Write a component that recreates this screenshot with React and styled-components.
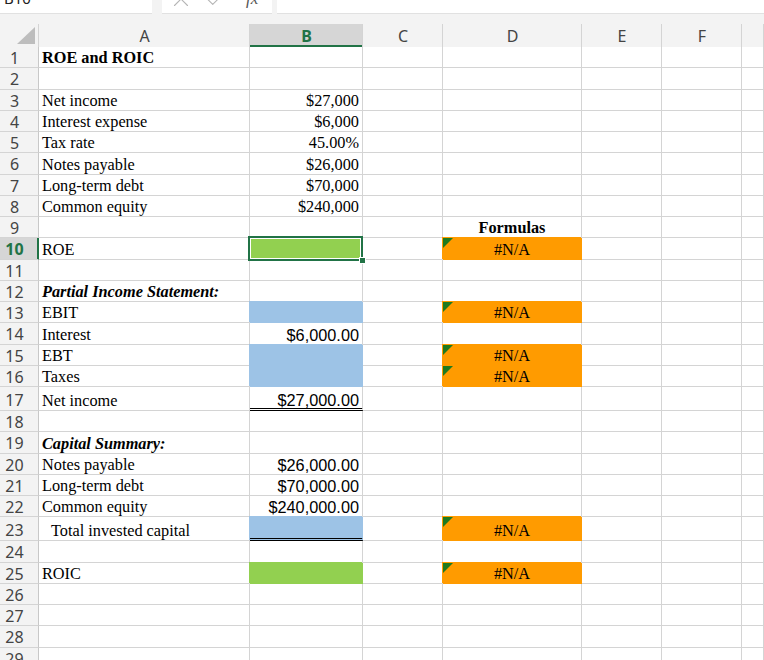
import React from "react";
import styled, { createGlobalStyle } from "styled-components";
import { X, Check, ChevronDown } from "lucide-react";

const GlobalStyle = createGlobalStyle`
  html, body {
    margin: 0;
    padding: 0;
    background: #fff;
    overflow: hidden;
  }
`;

const COLS = "39px 211px 113px 80px 139px 80px 80px 1fr";
const GRID = "#d4d4d4";
const XL_GREEN = "#217346";
const SERIF = `"Liberation Serif", "Times New Roman", serif`;
const SANS = `"Liberation Sans", Arial, sans-serif`;
const UI = `"Noto Sans", "Open Sans", sans-serif`;

const Page = styled.div`
  width: 764px;
  height: 660px;
  overflow: hidden;
  background: #fff;
`;

const FormulaBar = styled.div`
  display: flex;
  height: 32px;
  margin-top: -18px;
  background: #f3f3f3;
`;

const NameBox = styled.div`
  width: 152px;
  box-sizing: border-box;
  display: flex;
  align-items: center;
  justify-content: space-between;
  padding: 0 4px 0 4px;
  background: #fff;
  border-bottom: 1px solid #e1e1e1;
  font-family: ${UI};
  font-size: 15px;
  color: #222;
`;

const FxBox = styled.div`
  width: 110px;
  margin-left: 10px;
  display: flex;
  align-items: center;
  gap: 9px;
  padding: 3px 0 0 6px;
  box-sizing: border-box;
  background: #fff;
  border-bottom: 1px solid #e1e1e1;
  color: #b5b5b5;
`;

const Fx = styled.span`
  font-family: ${SERIF};
  font-style: italic;
  font-size: 17px;
  color: #555;
  margin-left: 8px;
`;

const FormulaInput = styled.div`
  flex: 1;
  margin-left: 5px;
  background: #fff;
  border-bottom: 1px solid #e1e1e1;
`;

const Spacer = styled.div`
  height: 10px;
  background: #f3f3f3;
`;

const Row = styled.div`
  display: grid;
  grid-template-columns: ${COLS};
  height: ${(p) => p.$h}px;
`;

const HeadCell = styled.div`
  display: flex;
  align-items: center;
  justify-content: center;
  padding-top: 1px;
  background: ${(p) => (p.$active ? "#d6d6d6" : "#f3f3f3")};
  border-bottom: 1px solid #bfbfbf;
  box-shadow: ${(p) => (p.$active ? `inset 0 -2px 0 ${XL_GREEN}` : "none")};
  font-family: ${UI};
  font-size: 16px;
  font-weight: ${(p) => (p.$active ? 700 : 400)};
  color: ${(p) => (p.$active ? XL_GREEN : "#444")};
  position: relative;

  &::after {
    content: "";
    position: absolute;
    right: 0;
    bottom: 0;
    top: 0;
    width: 1px;
    background: ${GRID};
  }
`;

const Corner = styled.div`
  display: flex;
  align-items: flex-end;
  justify-content: flex-end;
  padding: 0 3px 3px 0;
  background: #f3f3f3;
  border-bottom: 1px solid #bfbfbf;
  border-right: 1px solid ${GRID};

  &::before {
    content: "";
    width: 0;
    height: 0;
    border-left: 18px solid transparent;
    border-bottom: 17px solid #bdbdbd;
  }
`;

const RowNum = styled.div`
  display: flex;
  align-items: center;
  justify-content: center;
  padding: 2px 9px 0 0;
  background: ${(p) => (p.$active ? "#d6d6d6" : "#f3f3f3")};
  border-right: 1px solid ${(p) => (p.$active ? XL_GREEN : "#c8c8c8")};
  border-bottom: 1px solid ${GRID};
  box-shadow: ${(p) => (p.$active ? `inset -1px 0 0 ${XL_GREEN}` : "none")};
  font-family: ${UI};
  font-size: 16px;
  font-weight: ${(p) => (p.$active ? 700 : 400)};
  color: ${(p) => (p.$active ? XL_GREEN : "#444")};
  overflow: hidden;
`;

const justify = { right: "flex-end", center: "center", left: "flex-start" };

const Cell = styled.div`
  position: relative;
  display: flex;
  align-items: flex-end;
  justify-content: ${(p) => justify[p.$align || "left"]};
  padding: 0 3px ${(p) => (p.$double ? 0 : 1)}px ${(p) => (p.$indent ? 12 : 3)}px;
  background: ${(p) => p.$fill || "#fff"};
  border-right: 1px solid ${(p) => p.$fill || GRID};
  border-bottom: ${(p) =>
    p.$double ? "3px double #000" : `1px solid ${p.$fill || GRID}`};
  box-shadow: ${(p) => (p.$fill ? `-1px -1px 0 0 ${p.$fill}` : "none")};
  font-family: ${(p) => (p.$sans ? SANS : SERIF)};
  font-size: 16.3px;
  line-height: 16px;
  font-weight: ${(p) => (p.$bold ? 700 : 400)};
  font-style: ${(p) => (p.$italic ? "italic" : "normal")};
  color: #000;
  white-space: nowrap;
  min-width: 0;

  ${(p) =>
    p.$flag &&
    `
    &::before {
      content: "";
      position: absolute;
      top: 0;
      left: 0;
      border-top: 10px solid #1f7a1f;
      border-right: 10px solid transparent;
    }
  `}
`;

const Selection = styled.div`
  position: absolute;
  top: -2px;
  left: -2px;
  right: -1px;
  bottom: -2px;
  border: 2px solid ${XL_GREEN};
  box-shadow: inset 0 0 0 1px #fff;
  z-index: 2;
  pointer-events: none;

  &::after {
    content: "";
    position: absolute;
    right: -5px;
    bottom: -5px;
    width: 5px;
    height: 5px;
    background: ${XL_GREEN};
    border: 1px solid #fff;
  }
`;

const GREEN = "#92d050";
const BLUE = "#9dc3e6";
const ORANGE = "#ff9b00";

// a: column A, b: column B, d: column D
const rows = [
  { a: "ROE and ROIC", aBold: true },
  {},
  { a: "Net income", b: "$27,000" },
  { a: "Interest expense", b: "$6,000" },
  { a: "Tax rate", b: "45.00%" },
  { a: "Notes payable", b: "$26,000" },
  { a: "Long-term debt", b: "$70,000" },
  { a: "Common equity", b: "$240,000" },
  { d: "Formulas", dHead: true },
  { a: "ROE", bFill: GREEN, selected: true, d: "#N/A" },
  {},
  { a: "Partial Income Statement:", aBold: true, aItalic: true },
  { a: "EBIT", bFill: BLUE, d: "#N/A" },
  { a: "Interest", b: "$6,000.00", bSans: true },
  { a: "EBT", bFill: BLUE, d: "#N/A" },
  { a: "Taxes", bFill: BLUE, d: "#N/A" },
  { a: "Net income", b: "$27,000.00", bSans: true, double: true, h: 24 },
  {},
  { a: "Capital Summary:", aBold: true, aItalic: true },
  { a: "Notes payable", b: "$26,000.00", bSans: true },
  { a: "Long-term debt", b: "$70,000.00", bSans: true },
  { a: "Common equity", b: "$240,000.00", bSans: true },
  { a: "Total invested capital", indent: true, bFill: BLUE, double: true, d: "#N/A", h: 24 },
  {},
  { a: "ROIC", bFill: GREEN, d: "#N/A" },
  {},
  {},
  {},
  {},
];

const letters = ["A", "B", "C", "D", "E", "F", ""];

export default function App() {
  return (
    <Page>
      <GlobalStyle />
      <FormulaBar>
        <NameBox>
          <span>B10</span>
          <ChevronDown size={16} strokeWidth={1.5} color="#555" />
        </NameBox>
        <FxBox>
          <X size={26} strokeWidth={1} />
          <Check size={26} strokeWidth={1} />
          <Fx>fx</Fx>
        </FxBox>
        <FormulaInput />
      </FormulaBar>
      <Spacer />
      <Row $h={23}>
        <Corner />
        {letters.map((l, i) => (
          <HeadCell key={i} $active={l === "B"}>
            {l}
          </HeadCell>
        ))}
      </Row>
      {rows.map((r, i) => {
        const n = i + 1;
        const isD = r.d && !r.dHead;
        return (
          <Row key={n} $h={r.h || 21.25}>
            <RowNum $active={n === 10}>{n}</RowNum>
            <Cell $bold={r.aBold} $italic={r.aItalic} $indent={r.indent}>
              {r.a}
            </Cell>
            <Cell $align="right" $sans={r.bSans} $fill={r.bFill} $double={r.double}>
              {r.b}
              {r.selected && <Selection />}
            </Cell>
            <Cell />
            <Cell
              $align="center"
              $bold={r.dHead}
              $fill={isD ? ORANGE : undefined}
              $flag={isD}
            >
              {r.d}
            </Cell>
            <Cell />
            <Cell />
            <Cell />
          </Row>
        );
      })}
    </Page>
  );
}
